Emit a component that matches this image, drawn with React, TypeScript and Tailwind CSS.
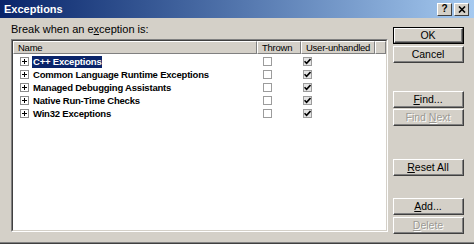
import React from "react";

interface ExceptionRow {
  name: string;
  thrown: boolean;
  userUnhandled: boolean;
}

const rows: ExceptionRow[] = [
  { name: "C++ Exceptions", thrown: false, userUnhandled: true },
  { name: "Common Language Runtime Exceptions", thrown: false, userUnhandled: true },
  { name: "Managed Debugging Assistants", thrown: false, userUnhandled: true },
  { name: "Native Run-Time Checks", thrown: false, userUnhandled: true },
  { name: "Win32 Exceptions", thrown: false, userUnhandled: true },
];

const font = { fontFamily: '"Liberation Sans", Arial, sans-serif' };

const Expander: React.FC = () => (
  <div className="w-[9px] h-[9px] border border-[#8c8c8c] bg-white flex items-center justify-center shrink-0">
    <svg width="5" height="5" viewBox="0 0 5 5">
      <path d="M0 2.5H5M2.5 0V5" stroke="#000" strokeWidth="1" />
    </svg>
  </div>
);

const CheckBox: React.FC<{ checked: boolean }> = ({ checked }) => (
  <div
    className={`w-[9px] h-[9px] border border-[#9c9c9c] flex items-center justify-center ${
      checked ? "bg-[#e4e4e4]" : "bg-white"
    }`}
  >
    {checked && (
      <svg width="7" height="7" viewBox="0 0 7 7">
        <path d="M0.5 3.2L2.6 5.4L6.5 1" stroke="#000" strokeWidth="1.6" fill="none" />
      </svg>
    )}
  </div>
);

const Button: React.FC<{
  children: React.ReactNode;
  disabled?: boolean;
  isDefault?: boolean;
  className?: string;
}> = ({ children, disabled, isDefault, className = "" }) => (
  <div className={`w-[71px] h-[17px] ${isDefault ? "border border-black" : ""} ${className}`}>
    <div className="w-full h-full border-t border-l border-white border-r border-b border-r-[#404040] border-b-[#404040] bg-[#d4d0c8]">
      <div className="w-full h-full border-r border-b border-[#808080] flex items-center justify-center">
        <span
          className={`text-[10.5px] leading-none whitespace-nowrap ${
            disabled ? "text-[#9c9a94] [text-shadow:1px_1px_0_#fff]" : "text-black"
          }`}
        >
          {children}
        </span>
      </div>
    </div>
  </div>
);

const HeaderCell: React.FC<{ children?: React.ReactNode; className?: string }> = ({
  children,
  className = "",
}) => (
  <div
    className={`h-[13px] bg-[#d4d0c8] border-t border-l border-white border-r border-b border-r-[#808080] border-b-[#808080] flex items-center pl-[4px] text-[9.5px] tracking-[-0.25px] leading-none text-black whitespace-nowrap overflow-hidden ${className}`}
  >
    {children}
  </div>
);

export default function App() {
  return (
    <div className="w-[474px] h-[244px] bg-[#d4d0c8] flex flex-col overflow-hidden" style={font}>
      <div className="h-[18px] shrink-0 bg-gradient-to-r from-[#0a246a] to-[#a6caf0] flex items-center justify-between pl-[4px] pr-[5px]">
        <span className="text-white font-bold text-[11px] leading-none">Exceptions</span>
        <div className="flex gap-[2px]">
          <div className="w-[15px] h-[13px] bg-[#d4d0c8] border-t border-l border-white border-r border-b border-r-[#404040] border-b-[#404040] flex items-center justify-center text-[10px] font-bold leading-none">
            ?
          </div>
          <div className="w-[15px] h-[13px] bg-[#d4d0c8] border-t border-l border-white border-r border-b border-r-[#404040] border-b-[#404040] flex items-center justify-center">
            <svg width="8" height="7" viewBox="0 0 8 7">
              <path d="M1 0.5L7 6.5M7 0.5L1 6.5" stroke="#000" strokeWidth="1.6" />
            </svg>
          </div>
        </div>
      </div>

      <div className="flex flex-1 pl-[11px] pr-[9px]">
        <div className="flex flex-col w-[377px]">
          <div className="h-[21px] flex items-center text-[11px] text-black leading-none pt-[1px]">
            <span>
              Break when an e<span className="underline">x</span>ception is:
            </span>
          </div>
          <div className="h-[193px] border-t border-l border-[#808080] border-r border-b border-r-white border-b-white">
            <div className="w-full h-full border-t border-l border-[#404040] border-r border-b border-r-[#d4d0c8] border-b-[#d4d0c8] bg-white flex flex-col">
              <div className="flex">
                <HeaderCell className="w-[244px]">Name</HeaderCell>
                <HeaderCell className="w-[44px]">Thrown</HeaderCell>
                <HeaderCell className="w-[74px]">User-unhandled</HeaderCell>
                <HeaderCell className="flex-1" />
              </div>
              <div className="flex flex-col pt-[1px]">
                {rows.map((row, i) => (
                  <div key={row.name} className="h-[13px] flex items-center">
                    <div className="w-[244px] flex items-center pl-[7px] gap-[3px]">
                      <Expander />
                      <span
                        className={`font-bold text-[9.5px] tracking-[-0.2px] leading-[12px] px-[1px] whitespace-nowrap ${
                          i === 0 ? "bg-[#0a246a] text-white" : "text-black"
                        }`}
                      >
                        {row.name}
                      </span>
                    </div>
                    <div className="w-[44px] flex pl-[6px]">
                      <CheckBox checked={row.thrown} />
                    </div>
                    <div className="w-[74px] flex pl-[2px]">
                      <CheckBox checked={row.userUnhandled} />
                    </div>
                  </div>
                ))}
              </div>
            </div>
          </div>
        </div>

        <div className="flex flex-col ml-[5px] pt-[9px]">
          <Button isDefault>OK</Button>
          <Button className="mt-[2px]">Cancel</Button>
          <Button className="mt-[28px]">
            <span className="underline">F</span>ind...
          </Button>
          <Button disabled className="mt-[1px]">
            Find <span className="underline">N</span>ext
          </Button>
          <Button className="mt-[33px]">
            <span className="underline">R</span>eset All
          </Button>
          <Button className="mt-[22px]">
            <span className="underline">A</span>dd...
          </Button>
          <Button disabled className="mt-[2px]">
            <span className="underline">D</span>elete
          </Button>
        </div>
      </div>
      <div className="h-[2px] shrink-0 bg-[#808080] border-b border-[#404040]" />
    </div>
  );
}
